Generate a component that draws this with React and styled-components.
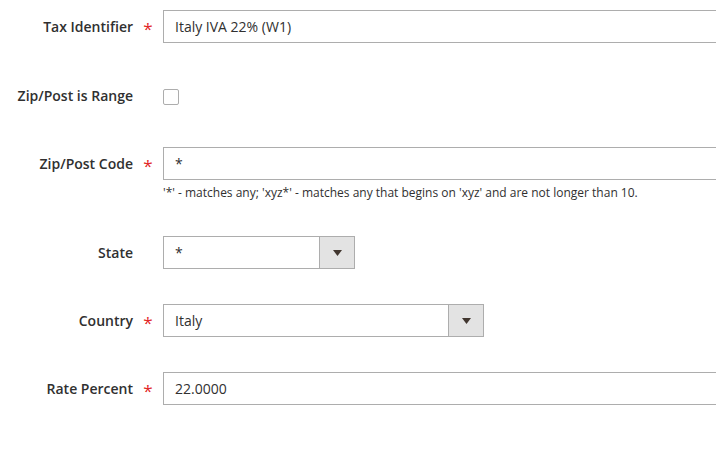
import React from "react";
import styled, { createGlobalStyle } from "styled-components";

const GlobalStyle = createGlobalStyle`
  html, body {
    margin: 0;
    padding: 0;
    background: #ffffff;
    overflow: hidden;
  }
  body {
    font-family: "Open Sans", "Liberation Sans", sans-serif;
    color: #303030;
  }
`;

const Form = styled.div`
  width: 716px;
  padding-top: 10px;
  display: flex;
  flex-direction: column;
  gap: 35px;
`;

const Field = styled.div`
  display: grid;
  grid-template-columns: 133px 30px 1fr;
  align-items: start;
`;

const Label = styled.label`
  height: ${p => p.$h || 33}px;
  display: flex;
  align-items: center;
  justify-content: flex-end;
  font-size: 14px;
  font-weight: 600;
  color: #303030;
  white-space: nowrap;
`;

const Required = styled.span`
  height: 33px;
  display: flex;
  align-items: center;
  justify-content: center;
  color: #e22626;
  font-size: 17px;
  font-weight: 400;
  padding-top: 3px;
  box-sizing: border-box;
`;

const Control = styled.div`
  display: flex;
  flex-direction: column;
  min-width: 0;
`;

const TextInput = styled.div`
  box-sizing: border-box;
  height: 33px;
  width: 100%;
  border: 1px solid #adadad;
  border-right: none;
  background: #fff;
  display: flex;
  align-items: center;
  padding: 0 11px;
  font-size: 14px;
  color: #303030;
`;

const Note = styled.div`
  margin-top: 5px;
  line-height: 16px;
  font-size: 12px;
  color: #303030;
  white-space: nowrap;
`;

const CheckRow = styled.div`
  height: 34px;
  display: flex;
  align-items: center;
  padding-top: 4px;
  box-sizing: border-box;
`;

const Checkbox = styled.span`
  width: 16px;
  height: 16px;
  box-sizing: border-box;
  border: 1px solid #adadad;
  border-radius: 2px;
  background: #fff;
`;

const Select = styled.div`
  box-sizing: border-box;
  height: 33px;
  width: ${p => p.$w}px;
  border: 1px solid #adadad;
  background: #fff;
  display: flex;
`;

const SelectValue = styled.div`
  flex: 1;
  display: flex;
  align-items: center;
  padding: 0 11px;
  font-size: 14px;
`;

const SelectArrow = styled.div`
  width: 34px;
  background: #e3e3e3;
  border-left: 1px solid #adadad;
  display: flex;
  align-items: center;
  justify-content: center;
`;

const Arrow = () => (
  <svg width="9" height="6" viewBox="0 0 9 6">
    <path d="M0 0H9L4.5 6Z" fill="#41362f" />
  </svg>
);

const Empty = styled.span``;

const App = () => (
  <>
    <GlobalStyle />
    <Form>
      <Field>
        <Label>Tax Identifier</Label>
        <Required>*</Required>
        <Control>
          <TextInput>Italy IVA 22% (W1)</TextInput>
        </Control>
      </Field>

      <Field>
        <Label $h={34}>Zip/Post is Range</Label>
        <Empty />
        <CheckRow>
          <Checkbox />
        </CheckRow>
      </Field>

      <Field>
        <Label>Zip/Post Code</Label>
        <Required>*</Required>
        <Control>
          <TextInput>*</TextInput>
          <Note>
            '*' - matches any; 'xyz*' - matches any that begins on 'xyz' and are
            not longer than 10.
          </Note>
        </Control>
      </Field>

      <Field>
        <Label>State</Label>
        <Empty />
        <Control>
          <Select $w={192}>
            <SelectValue>*</SelectValue>
            <SelectArrow>
              <Arrow />
            </SelectArrow>
          </Select>
        </Control>
      </Field>

      <Field>
        <Label>Country</Label>
        <Required>*</Required>
        <Control>
          <Select $w={321}>
            <SelectValue>Italy</SelectValue>
            <SelectArrow>
              <Arrow />
            </SelectArrow>
          </Select>
        </Control>
      </Field>

      <Field>
        <Label>Rate Percent</Label>
        <Required>*</Required>
        <Control>
          <TextInput>22.0000</TextInput>
        </Control>
      </Field>
    </Form>
  </>
);

export default App;
